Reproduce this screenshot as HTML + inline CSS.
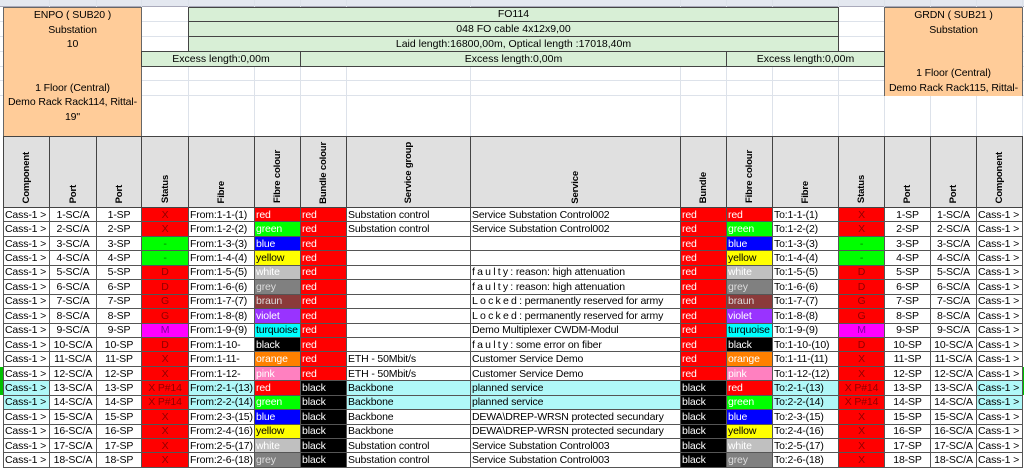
<!DOCTYPE html>
<html><head><meta charset="utf-8"><style>
*{margin:0;padding:0;box-sizing:border-box}
body{width:1024px;height:467px;overflow:hidden;background:#fff;font-family:"Liberation Sans",sans-serif;font-size:10.5px;color:#000;position:relative}
.a{position:absolute}
.vl{position:absolute;top:0;height:136px;width:1px;background:#dde2ea}
.hl{position:absolute;left:0;width:1024px;height:1px;background:#dde2ea}
.blk{position:absolute;text-align:center;line-height:14.5px;white-space:nowrap;letter-spacing:-0.1px}
.or{background:#ffcc99;border:1px solid #666}
.gr{background:#d8efd6;border:1px solid #444;text-align:center;line-height:13px;position:absolute}
table{position:absolute;left:3px;top:136px;border-collapse:collapse;table-layout:fixed;width:1019px}
td{border:1px solid #555;height:14.45px;padding:0 1px;white-space:nowrap;overflow:hidden;line-height:12px;font-size:10.5px;letter-spacing:-0.15px}
th{border:1px solid #444;background:#e0e0e0;height:71px;padding:0}
.h{height:69px;overflow:hidden;display:flex;align-items:flex-end;justify-content:center;padding-bottom:3px}
.h span{writing-mode:vertical-rl;transform:rotate(180deg);font-weight:bold;font-size:9.6px;letter-spacing:-0.2px;display:inline-block;white-space:nowrap}
.c{text-align:center}
.R{background:#ff0000;color:#fff}
.Rs{background:#ff0000;color:#900000;text-align:center}
.Gs{background:#00ff00;color:#008000;text-align:center}
.Ms{background:#ff00ff;color:#8000a0;text-align:center}
.G{background:#00ff00;color:#fff}
.B{background:#0000ff;color:#fff}
.Y{background:#ffff00;color:#000}
.W{background:#c0c0c0;color:#fff}
.Gy{background:#808080;color:#ddd}
.Br{background:#8b3a3a;color:#ddd}
.V{background:#9933ff;color:#fff}
.T{background:#00ffff;color:#000}
.K{background:#000;color:#fff}
.O{background:#ff8000;color:#fff}
.P{background:#ff80c0;color:#fff}
.cy{background:#b0f8f8}
.sp{letter-spacing:2.2px}
</style></head><body>
<div class="a" style="left:0;top:0;width:1024px;height:7px;background:#e4e8f0;border-bottom:1px solid #aab"></div>
<div class="vl" style="left:49px"></div><div class="vl" style="left:96px"></div><div class="vl" style="left:141px"></div><div class="vl" style="left:188px"></div><div class="vl" style="left:254px"></div><div class="vl" style="left:300px"></div><div class="vl" style="left:346px"></div><div class="vl" style="left:470px"></div><div class="vl" style="left:680px"></div><div class="vl" style="left:726px"></div><div class="vl" style="left:772px"></div><div class="vl" style="left:838px"></div><div class="vl" style="left:884px"></div><div class="vl" style="left:930px"></div><div class="vl" style="left:976px"></div><div class="vl" style="left:1022px"></div>
<div class="hl" style="top:21px"></div><div class="hl" style="top:36px"></div><div class="hl" style="top:51px"></div><div class="hl" style="top:66px"></div><div class="hl" style="top:80px"></div><div class="hl" style="top:95px"></div>
<div class="blk or" style="left:3px;top:7px;width:139px;height:130px;padding-top:0">ENPO ( SUB20 )<br>Substation<br>10<br><br><br>1 Floor (Central)<br>Demo Rack Rack114, Rittal-<br>19"</div>
<div class="blk or" style="left:884px;top:7px;width:139px;height:89px;overflow:hidden;padding-top:0;border-bottom:none">GRDN ( SUB21 )<br>Substation<br><br><br>1 Floor (Central)<br>Demo Rack Rack115, Rittal-<br>19"</div>
<div class="gr" style="left:188px;top:7px;width:651px;height:15px">FO114</div>
<div class="gr" style="left:188px;top:21px;width:651px;height:16px;line-height:14px">048 FO cable 4x12x9,00</div>
<div class="gr" style="left:188px;top:36px;width:651px;height:16px;line-height:14px">Laid length:16800,00m, Optical length :17018,40m</div>
<div class="gr" style="left:141px;top:51px;width:160px;height:16px;line-height:14px">Excess length:0,00m</div>
<div class="gr" style="left:300px;top:51px;width:427px;height:16px;line-height:14px">Excess length:0,00m</div>
<div class="gr" style="left:726px;top:51px;width:159px;height:16px;line-height:14px">Excess length:0,00m</div>
<div class="a" style="left:0;top:367px;width:3px;height:28px;background:#00c000"></div>
<div class="a" style="left:1022px;top:367px;width:2px;height:28px;background:#00c000"></div>
<table>
<colgroup><col style="width:46px"><col style="width:47px"><col style="width:45px"><col style="width:47px"><col style="width:66px"><col style="width:46px"><col style="width:46px"><col style="width:124px"><col style="width:210px"><col style="width:46px"><col style="width:46px"><col style="width:66px"><col style="width:46px"><col style="width:46px"><col style="width:46px"><col style="width:46px"></colgroup>
<tr><th><div class="h"><span>Component</span></div></th><th><div class="h"><span>Port</span></div></th><th><div class="h"><span>Port</span></div></th><th><div class="h"><span>Status</span></div></th><th><div class="h"><span>Fibre</span></div></th><th><div class="h"><span>Fibre colour</span></div></th><th><div class="h"><span>Bundle colour</span></div></th><th><div class="h"><span>Service group</span></div></th><th><div class="h"><span>Service</span></div></th><th><div class="h"><span>Bundle</span></div></th><th><div class="h"><span>Fibre colour</span></div></th><th><div class="h"><span>Fibre</span></div></th><th><div class="h"><span>Status</span></div></th><th><div class="h"><span>Port</span></div></th><th><div class="h"><span>Port</span></div></th><th><div class="h"><span>Component</span></div></th></tr>
<tr><td>Cass-1 &gt;</td><td class="c">1-SC/A</td><td class="c">1-SP</td><td class="Rs">X</td><td>From:1-1-(1)</td><td class="R">red</td><td class="R">red</td><td>Substation control</td><td>Service Substation Control002</td><td class="R">red</td><td class="R">red</td><td>To:1-1-(1)</td><td class="Rs">X</td><td class="c">1-SP</td><td class="c">1-SC/A</td><td>Cass-1 &gt;</td></tr>
<tr><td>Cass-1 &gt;</td><td class="c">2-SC/A</td><td class="c">2-SP</td><td class="Rs">X</td><td>From:1-2-(2)</td><td class="G">green</td><td class="R">red</td><td>Substation control</td><td>Service Substation Control002</td><td class="R">red</td><td class="G">green</td><td>To:1-2-(2)</td><td class="Rs">X</td><td class="c">2-SP</td><td class="c">2-SC/A</td><td>Cass-1 &gt;</td></tr>
<tr><td>Cass-1 &gt;</td><td class="c">3-SC/A</td><td class="c">3-SP</td><td class="Gs">-</td><td>From:1-3-(3)</td><td class="B">blue</td><td class="R">red</td><td></td><td></td><td class="R">red</td><td class="B">blue</td><td>To:1-3-(3)</td><td class="Gs">-</td><td class="c">3-SP</td><td class="c">3-SC/A</td><td>Cass-1 &gt;</td></tr>
<tr><td>Cass-1 &gt;</td><td class="c">4-SC/A</td><td class="c">4-SP</td><td class="Gs">-</td><td>From:1-4-(4)</td><td class="Y">yellow</td><td class="R">red</td><td></td><td></td><td class="R">red</td><td class="Y">yellow</td><td>To:1-4-(4)</td><td class="Gs">-</td><td class="c">4-SP</td><td class="c">4-SC/A</td><td>Cass-1 &gt;</td></tr>
<tr><td>Cass-1 &gt;</td><td class="c">5-SC/A</td><td class="c">5-SP</td><td class="Rs">D</td><td>From:1-5-(5)</td><td class="W">white</td><td class="R">red</td><td></td><td><span class="sp">faulty</span>: reason: high attenuation</td><td class="R">red</td><td class="W">white</td><td>To:1-5-(5)</td><td class="Rs">D</td><td class="c">5-SP</td><td class="c">5-SC/A</td><td>Cass-1 &gt;</td></tr>
<tr><td>Cass-1 &gt;</td><td class="c">6-SC/A</td><td class="c">6-SP</td><td class="Rs">D</td><td>From:1-6-(6)</td><td class="Gy">grey</td><td class="R">red</td><td></td><td><span class="sp">faulty</span>: reason: high attenuation</td><td class="R">red</td><td class="Gy">grey</td><td>To:1-6-(6)</td><td class="Rs">D</td><td class="c">6-SP</td><td class="c">6-SC/A</td><td>Cass-1 &gt;</td></tr>
<tr><td>Cass-1 &gt;</td><td class="c">7-SC/A</td><td class="c">7-SP</td><td class="Rs">G</td><td>From:1-7-(7)</td><td class="Br">braun</td><td class="R">red</td><td></td><td><span class="sp">Locked</span>: permanently reserved for army</td><td class="R">red</td><td class="Br">braun</td><td>To:1-7-(7)</td><td class="Rs">G</td><td class="c">7-SP</td><td class="c">7-SC/A</td><td>Cass-1 &gt;</td></tr>
<tr><td>Cass-1 &gt;</td><td class="c">8-SC/A</td><td class="c">8-SP</td><td class="Rs">G</td><td>From:1-8-(8)</td><td class="V">violet</td><td class="R">red</td><td></td><td><span class="sp">Locked</span>: permanently reserved for army</td><td class="R">red</td><td class="V">violet</td><td>To:1-8-(8)</td><td class="Rs">G</td><td class="c">8-SP</td><td class="c">8-SC/A</td><td>Cass-1 &gt;</td></tr>
<tr><td>Cass-1 &gt;</td><td class="c">9-SC/A</td><td class="c">9-SP</td><td class="Ms">M</td><td>From:1-9-(9)</td><td class="T">turquoise</td><td class="R">red</td><td></td><td>Demo Multiplexer CWDM-Modul</td><td class="R">red</td><td class="T">turquoise</td><td>To:1-9-(9)</td><td class="Ms">M</td><td class="c">9-SP</td><td class="c">9-SC/A</td><td>Cass-1 &gt;</td></tr>
<tr><td>Cass-1 &gt;</td><td class="c">10-SC/A</td><td class="c">10-SP</td><td class="Rs">D</td><td>From:1-10-</td><td class="K">black</td><td class="R">red</td><td></td><td><span class="sp">faulty</span>: some error on fiber</td><td class="R">red</td><td class="K">black</td><td>To:1-10-(10)</td><td class="Rs">D</td><td class="c">10-SP</td><td class="c">10-SC/A</td><td>Cass-1 &gt;</td></tr>
<tr><td>Cass-1 &gt;</td><td class="c">11-SC/A</td><td class="c">11-SP</td><td class="Rs">X</td><td>From:1-11-</td><td class="O">orange</td><td class="R">red</td><td>ETH - 50Mbit/s</td><td>Customer Service Demo</td><td class="R">red</td><td class="O">orange</td><td>To:1-11-(11)</td><td class="Rs">X</td><td class="c">11-SP</td><td class="c">11-SC/A</td><td>Cass-1 &gt;</td></tr>
<tr><td>Cass-1 &gt;</td><td class="c">12-SC/A</td><td class="c">12-SP</td><td class="Rs">X</td><td>From:1-12-</td><td class="P">pink</td><td class="R">red</td><td>ETH - 50Mbit/s</td><td>Customer Service Demo</td><td class="R">red</td><td class="P">pink</td><td>To:1-12-(12)</td><td class="Rs">X</td><td class="c">12-SP</td><td class="c">12-SC/A</td><td>Cass-1 &gt;</td></tr>
<tr><td class="cy">Cass-1 &gt;</td><td class="c">13-SC/A</td><td class="c">13-SP</td><td class="Rs">X P#14</td><td class="cy">From:2-1-(13)</td><td class="R">red</td><td class="K">black</td><td class="cy">Backbone</td><td class="cy">planned service</td><td class="K">black</td><td class="R">red</td><td class="cy">To:2-1-(13)</td><td class="Rs">X P#14</td><td class="c">13-SP</td><td class="c">13-SC/A</td><td class="cy">Cass-1 &gt;</td></tr>
<tr><td class="cy">Cass-1 &gt;</td><td class="c">14-SC/A</td><td class="c">14-SP</td><td class="Rs">X P#14</td><td class="cy">From:2-2-(14)</td><td class="G">green</td><td class="K">black</td><td class="cy">Backbone</td><td class="cy">planned service</td><td class="K">black</td><td class="G">green</td><td class="cy">To:2-2-(14)</td><td class="Rs">X P#14</td><td class="c">14-SP</td><td class="c">14-SC/A</td><td class="cy">Cass-1 &gt;</td></tr>
<tr><td>Cass-1 &gt;</td><td class="c">15-SC/A</td><td class="c">15-SP</td><td class="Rs">X</td><td>From:2-3-(15)</td><td class="B">blue</td><td class="K">black</td><td>Backbone</td><td>DEWA\DREP-WRSN protected secundary</td><td class="K">black</td><td class="B">blue</td><td>To:2-3-(15)</td><td class="Rs">X</td><td class="c">15-SP</td><td class="c">15-SC/A</td><td>Cass-1 &gt;</td></tr>
<tr><td>Cass-1 &gt;</td><td class="c">16-SC/A</td><td class="c">16-SP</td><td class="Rs">X</td><td>From:2-4-(16)</td><td class="Y">yellow</td><td class="K">black</td><td>Backbone</td><td>DEWA\DREP-WRSN protected secundary</td><td class="K">black</td><td class="Y">yellow</td><td>To:2-4-(16)</td><td class="Rs">X</td><td class="c">16-SP</td><td class="c">16-SC/A</td><td>Cass-1 &gt;</td></tr>
<tr><td>Cass-1 &gt;</td><td class="c">17-SC/A</td><td class="c">17-SP</td><td class="Rs">X</td><td>From:2-5-(17)</td><td class="W">white</td><td class="K">black</td><td>Substation control</td><td>Service Substation Control003</td><td class="K">black</td><td class="W">white</td><td>To:2-5-(17)</td><td class="Rs">X</td><td class="c">17-SP</td><td class="c">17-SC/A</td><td>Cass-1 &gt;</td></tr>
<tr><td>Cass-1 &gt;</td><td class="c">18-SC/A</td><td class="c">18-SP</td><td class="Rs">X</td><td>From:2-6-(18)</td><td class="Gy">grey</td><td class="K">black</td><td>Substation control</td><td>Service Substation Control003</td><td class="K">black</td><td class="Gy">grey</td><td>To:2-6-(18)</td><td class="Rs">X</td><td class="c">18-SP</td><td class="c">18-SC/A</td><td>Cass-1 &gt;</td></tr>
</table>
</body></html>
